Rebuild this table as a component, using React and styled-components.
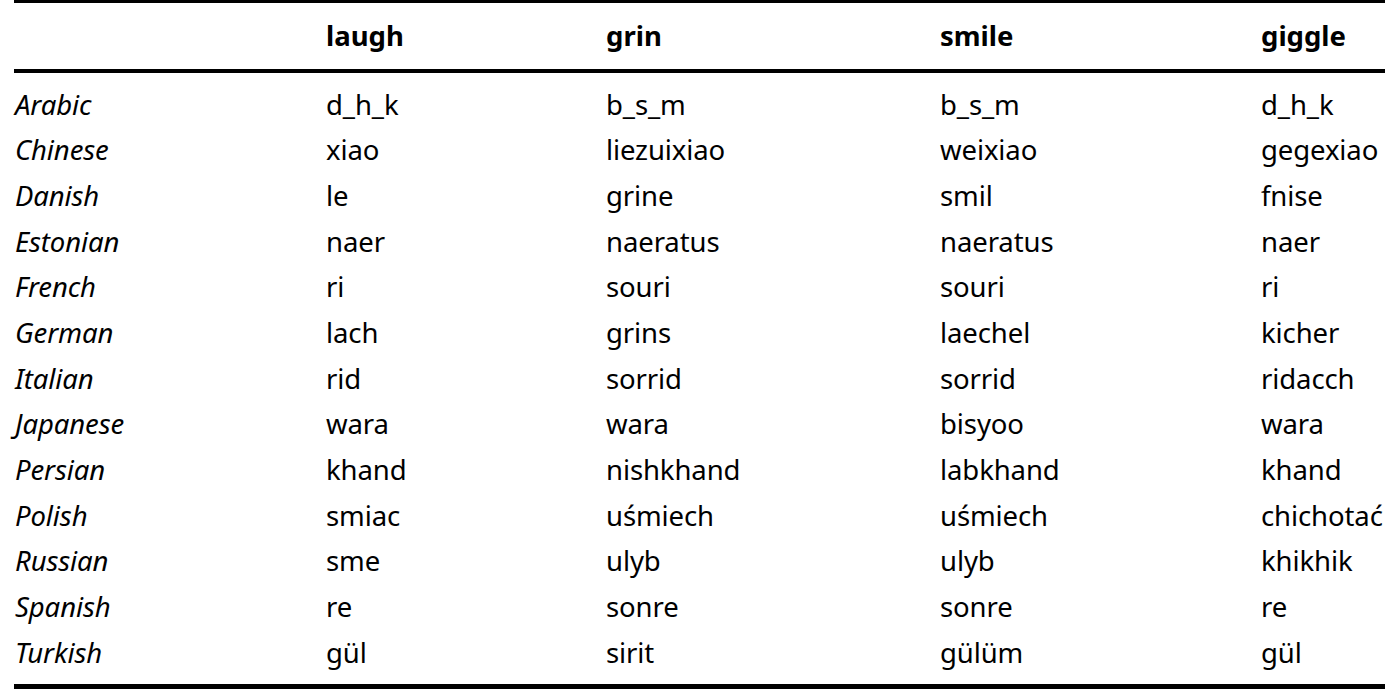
import React from 'react'
import styled, { createGlobalStyle } from 'styled-components'

const Global = createGlobalStyle`
  body {
    margin: 0;
    background: #fff;
    color: #000;
    font-family: "Noto Sans", "Open Sans", sans-serif;
  }
`

const columns = ['laugh', 'grin', 'smile', 'giggle']
const widths = [312, 280, 334, 321, 124]

const rows = [
  ['Arabic', 'd_h_k', 'b_s_m', 'b_s_m', 'd_h_k'],
  ['Chinese', 'xiao', 'liezuixiao', 'weixiao', 'gegexiao'],
  ['Danish', 'le', 'grine', 'smil', 'fnise'],
  ['Estonian', 'naer', 'naeratus', 'naeratus', 'naer'],
  ['French', 'ri', 'souri', 'souri', 'ri'],
  ['German', 'lach', 'grins', 'laechel', 'kicher'],
  ['Italian', 'rid', 'sorrid', 'sorrid', 'ridacch'],
  ['Japanese', 'wara', 'wara', 'bisyoo', 'wara'],
  ['Persian', 'khand', 'nishkhand', 'labkhand', 'khand'],
  ['Polish', 'smiac', 'uśmiech', 'uśmiech', 'chichotać'],
  ['Russian', 'sme', 'ulyb', 'ulyb', 'khikhik'],
  ['Spanish', 're', 'sonre', 'sonre', 're'],
  ['Turkish', 'gül', 'sirit', 'gülüm', 'gül'],
]

export default function App() {
  return (
    <Page>
      <Global />
      <Table>
        <colgroup>
          {widths.map((w, i) => <col key={i} style={{ width: w }} />)}
        </colgroup>
        <thead>
          <HeadRow>
            <Th />
            {columns.map(c => <Th key={c}>{c}</Th>)}
          </HeadRow>
        </thead>
        <Body>
          {rows.map(r => (
            <tr key={r[0]}>
              <Lang>{r[0]}</Lang>
              {r.slice(1).map((w, i) => <Td key={i}>{w}</Td>)}
            </tr>
          ))}
        </Body>
      </Table>
    </Page>
  )
}

const Page = styled.div`
  padding-left: 14px;
`

const Table = styled.table`
  width: 1371px;
  table-layout: fixed;
  border-collapse: collapse;
  border-top: 3px solid #000;
  border-bottom: 5px solid #000;
  font-size: 27.5px;
  line-height: 45.67px;
`

const HeadRow = styled.tr`
  border-bottom: 4px solid #000;
`

const Th = styled.th`
  text-align: left;
  font-weight: 700;
  padding: 10px 0 10px;
`

const Body = styled.tbody`
  tr:first-child td { padding-top: 9px; }
  tr:last-child td { padding-bottom: 9px; }
`

const Td = styled.td`
  padding: 0;
  white-space: nowrap;
  letter-spacing: -0.1px;
`

const Lang = styled(Td)`
  font-style: italic;
  padding-left: 1px;
`
